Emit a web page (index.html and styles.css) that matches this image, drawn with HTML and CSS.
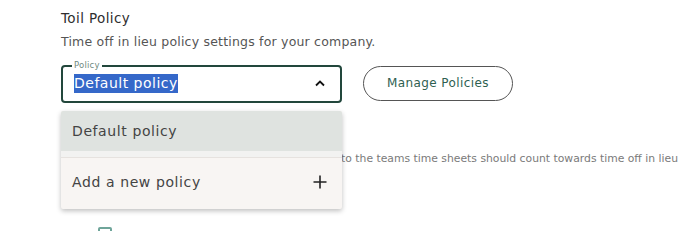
FILE: index.html
```html
<!DOCTYPE html>
<html>
<head>
<meta charset="utf-8">
<link rel="stylesheet" href="styles.css">
</head>
<body>
<div class="section">
  <h2 class="title">Toil Policy</h2>
  <p class="desc">Time off in lieu policy settings for your company.</p>
  <div class="row">
    <fieldset class="field">
      <legend class="legend">Policy</legend>
      <span class="value"><span class="sel">Default policy</span></span>
      <svg class="chev" width="12" height="8" viewBox="0 0 12 8"><path d="M2 6.5 L6 2.5 L10 6.5" fill="none" stroke="#111" stroke-width="1.8"/></svg>
    </fieldset>
    <button class="btn">Manage Policies</button>
  </div>
  <p class="hint">Whether overtime hours added to the teams time sheets should count towards time off in lieu</p>
  <div class="check-row"><span class="check"></span></div>

  <div class="menu">
    <div class="item active">Default policy</div>
    <div class="item add">Add a new policy
      <svg width="16" height="16" viewBox="0 0 16 16"><path d="M8 1.5 V14.5 M1.5 8 H14.5" stroke="#222" stroke-width="1.6"/></svg>
    </div>
  </div>
</div>
</body>
</html>
```

FILE: styles.css
```css
* { box-sizing: border-box; }
html, body { margin: 0; padding: 0; background: #fff; }
body { font-family: "DejaVu Sans", "Open Sans", sans-serif; width: 680px; height: 231px; overflow: hidden; }
.section { position: relative; padding: 10px 0 0 61px; }
.title { margin: 0; font-size: 13.5px; font-weight: 500; color: #2e2e2e; line-height: 16px; letter-spacing: 0.4px; }
.desc { margin: 8px 0 0; font-size: 12.5px; color: #555; line-height: 16px; letter-spacing: 0.2px; }
.row { display: flex; align-items: center; gap: 21px; margin-top: 11px; }
.field { position: relative; margin: 0; width: 281px; height: 42px; border: 2px solid #22473c; border-radius: 4px; padding: 0 12px 0 11px; display: flex; align-items: center; justify-content: space-between; }
.legend { font-size: 8.5px; color: #6f8a80; padding: 0 2px; margin-left: -2px; line-height: 9px; letter-spacing: 0.2px; }
.value { font-size: 14px; font-weight: 500; color: #fff; margin-top: -6px; letter-spacing: 0.5px; }
.sel { background: #3568c9; padding: 1px 0 2px; }
.chev { margin-top: -5px; margin-right: 2px; }
.btn { width: 150px; height: 35px; border: 1px solid #555; border-radius: 18px; background: #fff; font-family: inherit; font-size: 12px; color: #2f5f51; margin-top: 2px; letter-spacing: 0.4px; }
.hint { margin: 50px 0 0; padding-right: 2px; text-align: right; font-size: 10.8px; color: #7a7a7a; white-space: nowrap; line-height: 12px; }
.check-row { margin-top: 62px; padding-left: 37px; }
.check { display: block; width: 14px; height: 14px; border: 2px solid #6fa59a; border-radius: 2px; }
.menu { position: absolute; left: 61px; top: 111px; width: 281px; background: #f8f5f3; box-shadow: 0 2px 5px rgba(0,0,0,0.25); border-radius: 2px; overflow: hidden; }
.item { font-size: 14px; color: #444; padding: 0 11px; display: flex; align-items: center; justify-content: space-between; letter-spacing: 0.6px; }
.item.active { background: #dfe3e0; height: 46px; border-bottom: 6px solid #f2f2f1; }
.item.add { height: 52px; border-top: 1px solid #e6e2df; padding-right: 14px; padding-bottom: 3px; }
```
